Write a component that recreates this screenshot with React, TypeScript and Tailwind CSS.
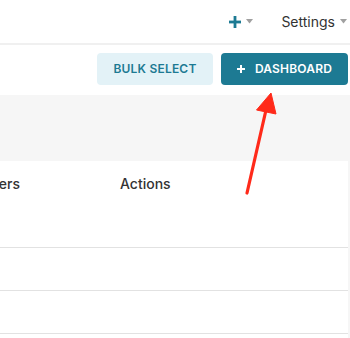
import React from "react";

function Caret() {
  return (
    <svg width="7" height="5" viewBox="0 0 7 5" className="ml-[5px]">
      <path d="M0 0 L7 0 L3.5 4.5 Z" fill="#a0a0a0" />
    </svg>
  );
}

export default function App() {
  return (
    <div
      className="relative w-[350px] h-[338px] overflow-hidden bg-[#f6f6f6]"
      style={{ fontFamily: "Inter, 'Noto Sans', sans-serif" }}
    >
      {/* Top nav */}
      <div className="h-[43px] bg-white flex items-center justify-end border-b-2 border-[#f0f0f0] box-content">
        <div className="flex items-center mr-[28px]">
          <svg width="12" height="12" viewBox="0 0 12 12">
            <rect x="4.6" y="0" width="2.8" height="12" fill="#1d7a93" />
            <rect x="0" y="4.6" width="12" height="2.8" fill="#1d7a93" />
          </svg>
          <Caret />
        </div>
        <div className="flex items-center mr-[3px] text-[14px] text-[#333]">
          <span>Settings</span>
          <Caret />
        </div>
      </div>

      {/* Action bar */}
      <div className="h-[50px] bg-white flex items-start justify-end pt-[8px] pr-[2px] gap-[8px]">
        <button className="h-[32px] w-[116px] rounded-[4px] bg-[#e3f2f7] text-[#1d7a93] text-[12px] font-semibold tracking-[0.2px]">
          BULK SELECT
        </button>
        <button className="h-[32px] w-[127px] rounded-[4px] bg-[#1d7a93] text-white text-[12px] font-semibold tracking-[0.2px] flex items-center justify-center gap-[10px]">
          <svg width="8" height="8" viewBox="0 0 8 8">
            <rect x="3" y="0" width="2" height="8" fill="white" />
            <rect x="0" y="3" width="8" height="2" fill="white" />
          </svg>
          <span>DASHBOARD</span>
        </button>
      </div>

      {/* Gray header space */}
      <div className="h-[66px]" />

      {/* Table card */}
      <div className="w-[348px] bg-white">
        <div className="h-[86px] flex items-start pt-[12px] text-[14px] font-medium text-[#333]">
          <div className="w-[20px] flex justify-end whitespace-nowrap">
            <span>Viewers</span>
          </div>
          <div className="ml-[100px]">Actions</div>
        </div>
        <div className="h-[43px] border-t border-[#e2e2e2]" />
        <div className="h-[43px] border-t border-[#e2e2e2]" />
        <div className="h-[43px] border-t border-[#e2e2e2]" />
      </div>

      {/* Annotation arrow */}
      <svg
        className="absolute left-0 top-0 pointer-events-none"
        width="350"
        height="338"
        viewBox="0 0 350 338"
      >
        <line x1="247" y1="193" x2="266" y2="110" stroke="#ff2a1a" strokeWidth="3.2" strokeLinecap="round" />
        <path d="M271 93 L276 114 L256.5 110 Z" fill="#ff2a1a" stroke="#ff2a1a" strokeWidth="1" strokeLinejoin="round" />
      </svg>
    </div>
  );
}
